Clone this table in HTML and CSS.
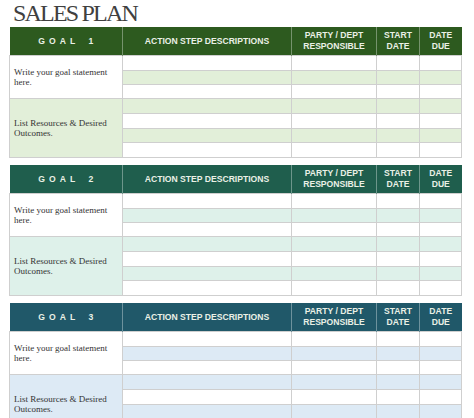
FILE: index.html
```html
<!DOCTYPE html>
<html>
<head>
<meta charset="utf-8">
<link rel="stylesheet" href="styles.css">
</head>
<body>
<div class="page">
  <h1 class="title">SALES PLAN</h1>

  <table class="plan plan-green">
    <colgroup><col class="c-goal"><col class="c-act"><col class="c-party"><col class="c-start"><col class="c-due"></colgroup>
    <tr class="head"><th class="goal">GOAL 1</th><th>ACTION STEP DESCRIPTIONS</th><th>PARTY / DEPT<br>RESPONSIBLE</th><th>START<br>DATE</th><th>DATE<br>DUE</th></tr>
    <tr class="r1"><td class="txt" rowspan="3">Write your goal statement here.</td><td></td><td></td><td></td><td></td></tr>
    <tr class="r2 tint"><td></td><td></td><td></td><td></td></tr>
    <tr class="r3"><td></td><td></td><td></td><td></td></tr>
    <tr class="r4 tint"><td class="txt tintcell" rowspan="4">List Resources &amp; Desired Outcomes.</td><td></td><td></td><td></td><td></td></tr>
    <tr class="r5"><td></td><td></td><td></td><td></td></tr>
    <tr class="r6 tint"><td></td><td></td><td></td><td></td></tr>
    <tr class="r7"><td></td><td></td><td></td><td></td></tr>
  </table>

  <table class="plan plan-teal">
    <colgroup><col class="c-goal"><col class="c-act"><col class="c-party"><col class="c-start"><col class="c-due"></colgroup>
    <tr class="head"><th class="goal">GOAL 2</th><th>ACTION STEP DESCRIPTIONS</th><th>PARTY / DEPT<br>RESPONSIBLE</th><th>START<br>DATE</th><th>DATE<br>DUE</th></tr>
    <tr class="r1"><td class="txt" rowspan="3">Write your goal statement here.</td><td></td><td></td><td></td><td></td></tr>
    <tr class="r2 tint"><td></td><td></td><td></td><td></td></tr>
    <tr class="r3"><td></td><td></td><td></td><td></td></tr>
    <tr class="r4 tint"><td class="txt tintcell" rowspan="4">List Resources &amp; Desired Outcomes.</td><td></td><td></td><td></td><td></td></tr>
    <tr class="r5"><td></td><td></td><td></td><td></td></tr>
    <tr class="r6 tint"><td></td><td></td><td></td><td></td></tr>
    <tr class="r7"><td></td><td></td><td></td><td></td></tr>
  </table>

  <table class="plan plan-blue">
    <colgroup><col class="c-goal"><col class="c-act"><col class="c-party"><col class="c-start"><col class="c-due"></colgroup>
    <tr class="head"><th class="goal">GOAL 3</th><th>ACTION STEP DESCRIPTIONS</th><th>PARTY / DEPT<br>RESPONSIBLE</th><th>START<br>DATE</th><th>DATE<br>DUE</th></tr>
    <tr class="r1"><td class="txt" rowspan="3">Write your goal statement here.</td><td></td><td></td><td></td><td></td></tr>
    <tr class="r2 tint"><td></td><td></td><td></td><td></td></tr>
    <tr class="r3"><td></td><td></td><td></td><td></td></tr>
    <tr class="r4 tint"><td class="txt tintcell" rowspan="4">List Resources &amp; Desired Outcomes.</td><td></td><td></td><td></td><td></td></tr>
    <tr class="r5"><td></td><td></td><td></td><td></td></tr>
    <tr class="r6 tint"><td></td><td></td><td></td><td></td></tr>
    <tr class="r7"><td></td><td></td><td></td><td></td></tr>
  </table>
</div>
</body>
</html>
```
FILE: styles.css
```css
html, body {
  margin: 0;
  padding: 0;
  background: #ffffff;
}
.page {
  padding: 1px 0 0 9px;
  display: flex;
  flex-direction: column;
  gap: 7px;
}
.title {
  margin: 0 0 -5px 4px;
  font-family: "Liberation Serif", serif;
  font-weight: normal;
  font-size: 24px;
  line-height: 24px;
  letter-spacing: -1.8px;
  color: #404040;
}
.plan {
  width: 452px;
  table-layout: fixed;
  border-collapse: collapse;
  font-family: "Liberation Sans", sans-serif;
}
.c-goal { width: 113px; }
.c-act { width: 169px; }
.c-party { width: 85px; }
.c-start { width: 43px; }
.c-due { width: 42px; }

.plan th {
  height: 28px;
  padding: 0;
  font-size: 8.6px;
  line-height: 11px;
  font-weight: bold;
  color: #eaf0e6;
  text-align: center;
  vertical-align: middle;
  border-left: 1px solid rgba(255,255,255,0.35);
}
.plan th:first-child { border-left: none; }
.plan th.goal {
  letter-spacing: 4px;
  word-spacing: 3px;
  padding-left: 4px;
}
.plan td {
  padding: 0;
  border: 1px solid #cfcfcf;
  background: #ffffff;
}
.plan .r1 td, .plan .r4 td, .plan .r5 td, .plan .r7 td { height: 14px; }
.plan .r2 td, .plan .r3 td, .plan .r6 td { height: 13px; }
.plan td.txt {
  font-family: "Liberation Serif", serif;
  font-size: 9px;
  line-height: 10px;
  color: #333333;
  padding: 0 8px 0 4px;
  vertical-align: middle;
}

.plan-green th { background: #2d5a1f; }
.plan-green .tint td, .plan-green td.tintcell { background: #e2efd9; }

.plan-teal th { background: #1f5e4d; }
.plan-teal .tint td, .plan-teal td.tintcell { background: #def1ea; }

.plan-blue th { background: #205869; }
.plan-blue .tint td, .plan-blue td.tintcell { background: #ddeaf5; }
```
